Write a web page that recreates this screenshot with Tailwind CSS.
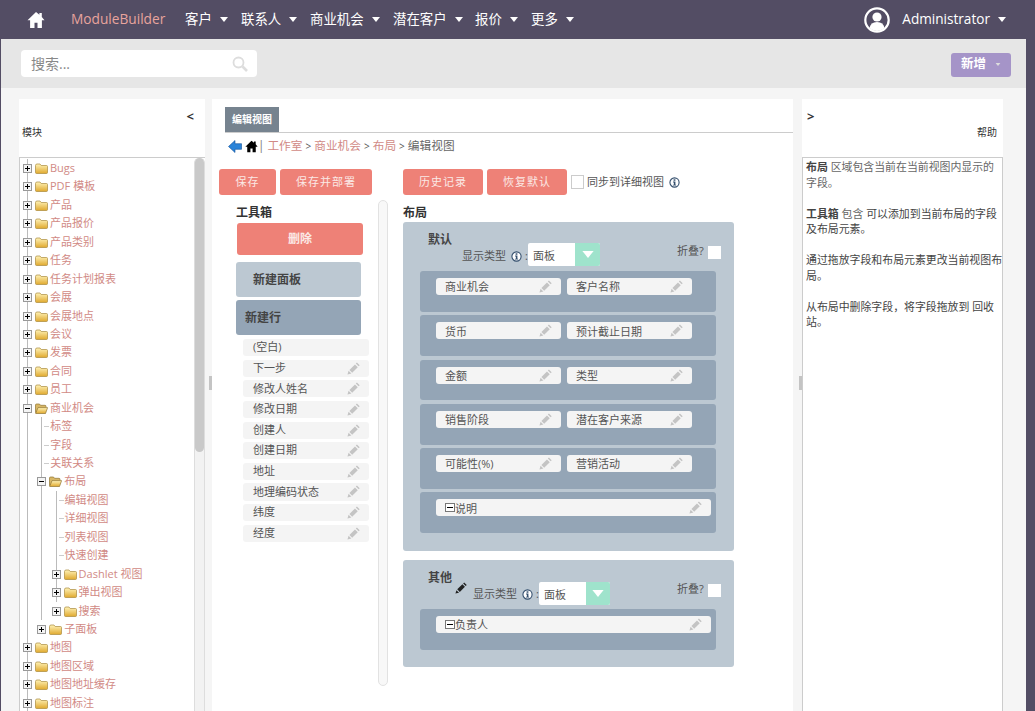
<!DOCTYPE html>
<html lang="en">
<head>
  <meta charset="UTF-8">
  <title>ModuleBuilder</title>
  <script src="https://cdn.jsdelivr.net/npm/@tailwindcss/browser@4"></script>
</head>
<body class="h-[711px] w-[1035px] overflow-hidden bg-[#534d64] font-['Open_Sans','Noto_Sans_CJK_SC',sans-serif] text-[11px] text-[#555]">
  <!-- Icons -->
  <svg class="absolute h-0 w-0">
    <defs>
      <linearGradient id="folderFill" x1="0" y1="0" x2="0" y2="1">
        <stop offset="0" stop-color="#fff3b8"/>
        <stop offset="1" stop-color="#e0a92e"/>
      </linearGradient>
    </defs>
    <symbol id="pencil" viewBox="0 0 14 14"><path d="M0.5 13.5l1.2-4 3 3zM2.6 8.6l6-6 3 3-6 6zM9.5 1.7l1.2-1.2 3 3-1.2 1.2z"/></symbol>
    <symbol id="info" viewBox="0 0 12 12"><circle cx="6" cy="6" r="5" fill="#fff" stroke="#35506e" stroke-width="1.2"/><rect x="5" y="2.5" width="2" height="1.6" fill="#35506e"/><path d="M4.4 5h2.6v3.4h.8v1H4.3v-1h1V6h-.9z" fill="#35506e"/></symbol>
    <symbol id="folder" viewBox="0 0 13 11"><path d="M.5 2.5Q.5 1 2 1h3l1.2 1.5H11.500q1 0 1 1V9.500q0 1-1 1h-10q-1 0-1-1z" fill="url(#folderFill)" stroke="#a98a3c" stroke-width=".7"/></symbol>
    <symbol id="folderOpen" viewBox="0 0 13 11"><path d="M.5 9.8V2Q.5 1 1.5 1h3l1 1.3h4.5q1 0 1 1V4.5" fill="#d8b765" stroke="#8f7432" stroke-width=".7"/><path d="M.7 10.5L3 4.6h9.6L10.5 10.5z" fill="url(#folderFill)" stroke="#8f7432" stroke-width=".7"/></symbol>
    <symbol id="caret" viewBox="0 0 8 5"><path d="M0 0h8L4 5z" fill="currentColor"/></symbol>
  </svg>

  <!-- Top bar -->
  <header class="flex h-[39px] items-center text-[13.4px] text-white">
    <svg class="ml-[27px] h-[18px] w-[18px]" viewBox="0 0 18 18" fill="#fff"><path d="M9 1L0.5 9.2h2.6V17h4.4v-5.2h3V17h4.4V9.2h2.6L14.8 6V2h-2.4v1.7z"/></svg>
    <span class="ml-[26px] w-[114px] text-[13.700px] text-[#e8a49d]">ModuleBuilder</span>
    <nav class="flex items-center">
      <a class="flex w-[56px] items-center">客户<svg class="ml-[8px] h-[5px] w-[8px]"><use href="#caret"/></svg></a>
      <a class="flex w-[69px] items-center">联系人<svg class="ml-[8px] h-[5px] w-[8px]"><use href="#caret"/></svg></a>
      <a class="flex w-[83px] items-center">商业机会<svg class="ml-[8px] h-[5px] w-[8px]"><use href="#caret"/></svg></a>
      <a class="flex w-[82px] items-center">潜在客户<svg class="ml-[8px] h-[5px] w-[8px]"><use href="#caret"/></svg></a>
      <a class="flex w-[56px] items-center">报价<svg class="ml-[8px] h-[5px] w-[8px]"><use href="#caret"/></svg></a>
      <a class="flex items-center">更多<svg class="ml-[8px] h-[5px] w-[8px]"><use href="#caret"/></svg></a>
    </nav>
    <svg class="ml-auto h-[26px] w-[26px]" viewBox="0 0 26 26"><circle cx="13" cy="13" r="11.7" fill="none" stroke="#fff" stroke-width="2.2"/><circle cx="13" cy="10" r="4.6" fill="#fff"/><path d="M5.5 21q1-6 7.5-6t7.5 6q-3.300 3-7.500 3t-7.500-3z" fill="#fff"/></svg>
    <span class="ml-[12px] text-[13.600px]">Administrator</span>
    <svg class="mr-[29px] ml-[8px] h-[5px] w-[8px]"><use href="#caret"/></svg>
  </header>

  <div class="mr-[9px] ml-[1px] h-[672px] bg-[#f5f5f5]">
    <!-- Search strip -->
    <div class="flex h-[49px] items-center justify-between bg-[#e6e6e6] pr-[15px] pl-[20px]">
      <div class="flex h-[27px] w-[236px] items-center justify-between rounded-[4px] bg-white pr-[9px] pl-[10px] text-[14px] text-[#888]">
        <span>搜索...</span>
        <svg class="h-[16px] w-[16px]" viewBox="0 0 16 16" fill="none" stroke="#ddd"><circle cx="6.500" cy="6.500" r="5" stroke-width="1.800"/><path d="M10.500 10.500L15 15" stroke-width="2.600"/></svg>
      </div>
      <button class="mt-[2px] flex h-[24px] w-[60px] items-center justify-center gap-[9px] rounded-[3px] bg-[#a594c8] text-[12.500px] font-bold text-white">新增<svg class="h-[3px] w-[6px] text-[#ddd]"><use href="#caret"/></svg></button>
    </div>

    <!-- Columns -->
    <div class="flex pt-[11px] pl-[18px]">
      <!-- Modules tree -->
      <aside class="w-[186px]">
        <div class="flex h-[58px] flex-col bg-white px-[3px] text-[10px] text-[#333]">
          <span class="mt-[8px] self-end pr-[8px] text-[13px] leading-[18px] font-bold">&lt;</span>
          <span class="mt-0">模块</span>
        </div>
        <div class="relative h-[560px] overflow-hidden border-t border-l border-[#ccc] bg-white">
          <div id="tree" class="pt-[1px]"></div>
          <div class="absolute top-0 right-0 h-full w-[11px] rounded-[5px] border-x border-[#ddd] bg-[#f2f2f2]">
            <div class="h-[294px] rounded-[5px] bg-[#c9c9c9]"></div>
          </div>
        </div>
      </aside>

      <div class="flex w-[7px] justify-end pt-[277px]"><div class="h-[14px] w-[3px] bg-[#c4c4c4]"></div></div>

      <!-- Editor -->
      <main class="h-[620px] w-[581px] bg-white pt-[8px]">
        <div class="ml-[13px] border-b border-[#ccc]">
          <div class="flex h-[25px] w-[54px] items-center justify-center bg-[#76838f] text-[10px] font-bold text-white">编辑视图</div>
        </div>
        <div class="mt-[4px] ml-[16px] flex h-[18px] items-center gap-[3px] text-[11.700px]">
          <svg class="h-[13px] w-[14px]" viewBox="0 0 14 13"><path d="M7 0.500L0.500 6.500 7 12.500V9.300H13.500V3.700H7z" fill="#2a83d8" stroke="#0f4f99" stroke-width=".6"/></svg>
          <svg class="h-[13px] w-[13px]" viewBox="0 0 18 18"><path d="M9 1L0.500 9.200h2.600V17h4.400v-5.200h3V17h4.400V9.200h2.600L14.800 6V2h-2.400v1.700z"/></svg>
          <span class="-ml-[3px] text-[#777]">|</span>
          <a class="text-[#d18a85]">工作室</a><span class="text-[10px]">&gt;</span>
          <a class="text-[#d18a85]">商业机会</a><span class="text-[10px]">&gt;</span>
          <a class="text-[#d18a85]">布局</a><span class="text-[10px]">&gt;</span>
          <span class="text-[#666]">编辑视图</span>
        </div>

        <div class="mt-[14px] flex">
          <!-- Toolbox -->
          <section class="w-[184px]">
            <div class="ml-[7px] flex gap-[4px] tracking-[1px] text-[#fbe9e6]">
              <button class="h-[26px] w-[57px] rounded-[3px] bg-[#ee8177]">保存</button>
              <button class="h-[26px] w-[92px] rounded-[3px] bg-[#ee8177]">保存并部署</button>
            </div>
            <div class="relative">
              <div class="absolute top-[-6px] left-[166px] h-[486px] w-[10px] rounded-[5px] border border-[#e2e2e2] bg-[#f8f8f8]"></div>
              <h3 class="mt-[11px] ml-[24px] text-[12px] leading-[14px] font-bold text-[#333]">工具箱</h3>
              <button class="mt-[3px] ml-[25px] h-[32px] w-[126px] rounded-[3px] bg-[#ee8177] text-[12px] font-bold text-[#fbe9e6]">删除</button>
              <div class="mt-[7px] ml-[24px] flex h-[35px] w-[125px] items-center rounded-[3px] bg-[#bcc8d2] pl-[17px] text-[12px] font-bold text-[#444]">新建面板</div>
              <div class="mt-[3px] ml-[24px] flex h-[35px] w-[125px] items-center rounded-[3px] bg-[#94a5b6] pl-[9px] text-[12px] font-bold text-[#444]">新建行</div>
              <div id="toolbox" class="mt-[4px] ml-[31px] flex w-[126px] flex-col gap-[3.450px]"></div>
            </div>
          </section>

          <!-- Layout -->
          <section class="w-[345px] pl-[7px]">
            <div class="flex items-center">
              <button class="h-[26px] w-[80px] rounded-[3px] bg-[#ee8177] tracking-[1px] text-[#fbe9e6]">历史记录</button>
              <button class="ml-[4px] h-[26px] w-[80px] rounded-[3px] bg-[#ee8177] tracking-[1px] text-[#fbe9e6]">恢复默认</button>
              <span class="ml-[4px] h-[14px] w-[13px] border border-[#ccc] bg-white"></span>
              <span class="ml-[3px]">同步到详细视图</span>
              <svg class="ml-[5px] h-[11px] w-[11px]"><use href="#info"/></svg>
            </div>
            <h3 class="mt-[11px] text-[12px] leading-[14px] font-bold text-[#333]">布局</h3>
            <div class="mt-[2px] h-[329px] w-[331px] rounded-[3px] bg-[#bcc8d2]">
              <div class="relative h-[49px]">
                <b class="absolute top-[9px] left-[25px] text-[12px] text-[#444]">默认</b>
                <span class="absolute top-[26px] left-[59px] flex items-center gap-[3px]">显示类型<svg class="ml-[2px] h-[11px] w-[11px]"><use href="#info"/></svg>:</span>
                <div class="absolute top-[21px] left-[125px] flex h-[23px] w-[72px] overflow-hidden rounded-[2px] bg-white">
                  <span class="flex-1 pl-[5px] text-[11px] leading-[25px]">面板</span>
                  <span class="flex w-[25px] items-center justify-center bg-[#9fe3cc] text-white"><svg class="h-[7px] w-[12px]"><use href="#caret"/></svg></span>
                </div>
                <span class="absolute top-[21px] left-[274px]">折叠?</span>
                <span class="absolute top-[24px] left-[305px] h-[13px] w-[13px] bg-white"></span>
              </div>
              <div id="rowsDefault" class="ml-[17px] flex w-[296px] flex-col gap-[3.500px]"></div>
            </div>
            <div class="mt-[9px] h-[107px] w-[331px] rounded-[3px] bg-[#bcc8d2]">
              <div class="relative h-[49px]">
                <b class="absolute top-[9px] left-[25px] text-[12px] text-[#444]">其他</b>
                <svg class="absolute top-[22px] left-[52px] h-[12px] w-[12px]" fill="#222"><use href="#pencil"/></svg>
                <span class="absolute top-[26px] left-[70px] flex items-center gap-[3px]">显示类型<svg class="ml-[2px] h-[11px] w-[11px]"><use href="#info"/></svg>:</span>
                <div class="absolute top-[22px] left-[136px] flex h-[23px] w-[71px] overflow-hidden rounded-[2px] bg-white">
                  <span class="flex-1 pl-[5px] text-[11px] leading-[25px]">面板</span>
                  <span class="flex w-[24px] items-center justify-center bg-[#9fe3cc] text-white"><svg class="h-[7px] w-[12px]"><use href="#caret"/></svg></span>
                </div>
                <span class="absolute top-[21px] left-[274px]">折叠?</span>
                <span class="absolute top-[24px] left-[305px] h-[13px] w-[13px] bg-white"></span>
              </div>
              <div id="rowsOther" class="ml-[17px] w-[296px]"></div>
            </div>
          </section>
        </div>
      </main>

      <div class="flex w-[9px] justify-end pt-[277px]"><div class="h-[14px] w-[3px] bg-[#c4c4c4]"></div></div>

      <!-- Help -->
      <aside class="w-[201px]">
        <div class="flex h-[58px] flex-col bg-white px-[5px] text-[10px] text-[#333]">
          <span class="mt-[8px] text-[13px] leading-[18px] font-bold">&gt;</span>
          <span class="mt-0 self-end pr-[1px]">帮助</span>
        </div>
        <div class="h-[560px] border border-[#ccc] bg-white pt-[1px] pl-[3px] text-[10.900px] leading-[15.500px] whitespace-nowrap text-[#444]">
          <p><b>布局</b> <span class="text-[#666]">区域包含当前在当前视图内显示的</span><br><span class="text-[#666]">字段。</span></p>
          <p class="mt-[15.500px]"><b>工具箱</b> <span class="text-[#666]">包含</span> <span>可以添加到当前布局的字段</span><br>及布局元素。</p>
          <p class="mt-[15.500px]">通过拖放字段和布局元素更改当前视图布<br>局。</p>
          <p class="mt-[15.500px]">从布局中删除字段，将字段拖放到 回收<br>站。</p>
        </div>
      </aside>
    </div>
  </div>

  <script>
    // Tree rows: depth, state (c closed, o open, l leaf), label, guide columns drawn
    const treeRows = [
      [0,'c','Bugs'],[0,'c','PDF 模板'],[0,'c','产品'],[0,'c','产品报价'],[0,'c','产品类别'],
      [0,'c','任务'],[0,'c','任务计划报表'],[0,'c','会展'],[0,'c','会展地点'],[0,'c','会议'],
      [0,'c','发票'],[0,'c','合同'],[0,'c','员工'],[0,'o','商业机会'],
      [1,'l','标签',[1]],[1,'l','字段',[1]],[1,'l','关联关系',[1]],[1,'o','布局',[1]],
      [2,'l','编辑视图',[1,2]],[2,'l','详细视图',[1,2]],[2,'l','列表视图',[1,2]],[2,'l','快速创建',[1,2]],
      [2,'c','Dashlet 视图',[1,2]],[2,'c','弹出视图',[1,2]],[2,'c','搜索',[1]],
      [1,'c','子面板'],
      [0,'c','地图'],[0,'c','地图区域'],[0,'c','地图地址缓存'],[0,'c','地图标注']
    ];
    const lineClass = 'absolute top-0 h-full border-l border-[#bbb]';
    const boxSvg = (open) => `<svg class="absolute top-[5px] h-[9px] w-[9px]" style="left:LEFTpx" viewBox="0 0 9 9"><rect x=".5" y=".5" width="8" height="8" fill="#f4f4f4" stroke="#999"/><path d="M2 4.500h5${open ? '' : 'M4.500 2v5'}" stroke="#000"/></svg>`;

    document.getElementById('tree').innerHTML = treeRows.map(([depth, state, label, guides = []]) => {
      const step = 14.300;
      const x = 7 + depth * step;
      let html = `<div class="${lineClass}" style="left:7px"></div>`;
      guides.forEach(g => { html += `<div class="${lineClass}" style="left:${7 + g * step}px"></div>`; });
      if (state === 'l') {
        // leaf rows hang off the guide of their own depth
        html += `<div class="absolute top-[9px] h-px w-[5px] bg-[#ccc]" style="left:${x + 3}px"></div>`;
        html += `<span class="absolute text-[#d18a85]" style="left:${x + 9}px">${label}</span>`;
      } else {
        html += boxSvg(state === 'o').replace('LEFT', x - 4);
        html += `<svg class="absolute top-[4px] h-[11px] w-[13px]" style="left:${x + 8}px"><use href="#${state === 'o' ? 'folderOpen' : 'folder'}"/></svg>`;
        html += `<span class="absolute text-[#d18a85]" style="left:${x + 23}px">${label}</span>`;
      }
      return `<div class="relative h-[18.450px] text-[11px] leading-[18px]">${html}</div>`;
    }).join('');

    const pencil = '<svg class="h-[13px] w-[13px] shrink-0" fill="#c4c4c4"><use href="#pencil"/></svg>';

    // Toolbox items
    const toolItems = ['(空白)','下一步','修改人姓名','修改日期','创建人','创建日期','地址','地理编码状态','纬度','经度'];
    document.getElementById('toolbox').innerHTML = toolItems.map((t, i) =>
      `<div class="flex h-[17.200px] items-center justify-between rounded-[3px] bg-[#f4f4f4] pr-[9px] pl-[10px]"><span>${t}</span>${i ? pencil : ''}</div>`
    ).join('');

    // Layout rows
    const field = (t, wide) =>
      `<div class="flex h-[17px] items-center justify-between rounded-[3px] bg-[#f4f4f4] pr-[9px] ${wide ? 'w-[275px] pl-[9px]' : 'w-[125px] pl-[9px]'}"><span class="flex items-center pt-[2px]">${wide ? '<span class="-mt-[2px] flex h-[9px] w-[10px] items-center justify-center border border-[#777] bg-white"><span class="h-px w-[6px] bg-black"></span></span>' : ''}${t}</span>${pencil}</div>`;
    const row = (cells) =>
      `<div class="flex h-[40.800px] gap-[6px] rounded-[3px] bg-[#94a5b6] pt-[7px] pl-[16px]">${cells}</div>`;
    const pairs = [['商业机会','客户名称'],['货币','预计截止日期'],['金额','类型'],['销售阶段','潜在客户来源'],['可能性(%)','营销活动']];
    document.getElementById('rowsDefault').innerHTML =
      pairs.map(p => row(field(p[0]) + field(p[1]))).join('') + row(field('说明', true));
    document.getElementById('rowsOther').innerHTML = row(field('负责人', true));
  </script>
</body>
</html>
